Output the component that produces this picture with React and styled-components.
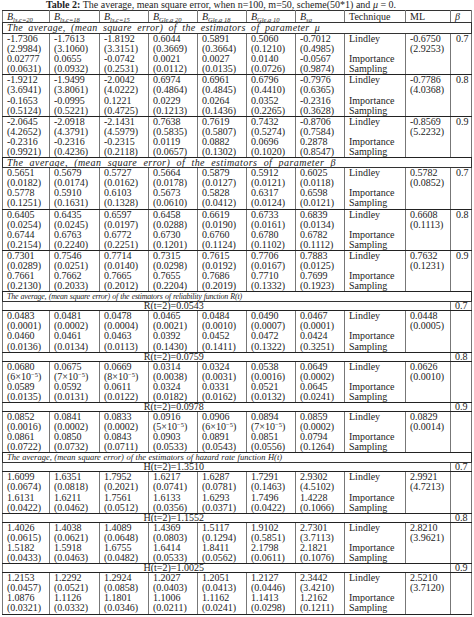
import React from 'react';
import styled, { createGlobalStyle, css } from 'styled-components';

const SERIF = `"Liberation Serif", "Times New Roman", Times, serif`;

const Global = createGlobalStyle`
  html, body { margin: 0; padding: 0; background: #fff; }
  body { font-family: ${SERIF}; color: #1c1c1c; }
`;

const cellFont = css`
  font-family: ${SERIF};
  color: #1c1c1c;
`;

const Page = styled.div`
  width: 474px;
  height: 617px;
  overflow: hidden;
  padding-left: 2px;
  box-sizing: border-box;
`;

const Caption = styled.div`
  width: 438px;
  height: 10px;
  font-family: ${SERIF};
  font-size: 10px;
  line-height: 10px;
  text-align: center;
  white-space: nowrap;
  b { font-weight: bold; }
  i { font-style: italic; }
`;

const Table = styled.table`
  ${cellFont};
  border-collapse: collapse;
  table-layout: fixed;
  width: 469px;
  font-size: 10px;
`;

const HeadCell = styled.th`
  ${cellFont};
  font-size: 10px;
  font-weight: normal;
  text-align: left;
  padding: 0 0 0 4px;
  height: 11px;
  line-height: 11px;
  border: 1px solid #333;
  border-left-color: #777;
  border-right-color: #777;
  white-space: nowrap;
  overflow: hidden;
  i { font-style: italic; }
  sub { font-size: 6.5px; font-style: italic; vertical-align: -2px; line-height: 0; }
`;

const SectionCell = styled.td`
  ${cellFont};
  font-style: italic;
  font-size: ${(p) => p.$size}px;
  letter-spacing: ${(p) => p.$ls}px;
  word-spacing: ${(p) => p.$ws}px;
  padding: 0 0 0 4px;
  height: ${(p) => p.$h}px;
  line-height: ${(p) => p.$h}px;
  border: 1px solid #333;
  white-space: nowrap;
  overflow: hidden;
`;

const RefCell = styled.td`
  ${cellFont};
  font-size: 10px;
  text-align: ${(p) => (p.$center ? 'center' : 'left')};
  padding: 0 0 0 ${(p) => (p.$center ? 0 : 4)}px;
  height: 8px;
  line-height: 8px;
  border-top: 1px solid #222;
  border-bottom: 1px solid #222;
  border-left: ${(p) => (p.$open ? 'none' : '1px solid #777')};
  border-right: ${(p) => (p.$openRight ? 'none' : '1px solid #777')};
  white-space: nowrap;
`;

const DataCell = styled.td`
  ${cellFont};
  font-size: 10px;
  vertical-align: top;
  padding: 0 0 0 ${(p) => p.$pad ?? 4}px;
  border-top: 1px solid #222;
  border-bottom: 1px solid #222;
  border-left: 1px solid #777;
  border-right: 1px solid #777;
  white-space: nowrap;
  overflow: hidden;
`;

const Line = styled.div`
  height: 10.1px;
  line-height: 10.1px;
  sup { font-size: 6.5px; line-height: 0; vertical-align: 3px; }
`;

const COLS = [47, 50, 49, 49, 49, 49, 49, 61, 45, 21];

const fmtMse = (s) => {
  if (s.includes('^')) {
    const [m, e] = s.split('^');
    return (
      <>
        ({m}
        <sup>{e}</sup>)
      </>
    );
  }
  return `(${s})`;
};

const sections = [
  {
    title: 'The average, (mean square error) of the estimators of parameter μ',
    style: { size: 10, ls: 0.33, ws: 2.5, h: 10 },
    blocks: [
      {
        beta: '0.7',
        cols: [
          ['-1.7306', '2.9984', '0.02777', '0.0631'],
          ['-1.7613', '3.1060', '0.0655', '0.0932'],
          ['-1.8192', '3.3151', '-0.0742', '0.2531'],
          ['0.6044', '0.3669', '0.0021', '0.0112'],
          ['0.5891', '0.3664', '0.0027', '0.0135'],
          ['0.5060', '0.1210', '0.0140', '0.0726'],
          ['-0.7012', '0.4985', '-0.0567', '0.9874'],
        ],
        ml: ['-0.6750', '2.9253'],
      },
      {
        beta: '0.8',
        cols: [
          ['-1.9212', '3.6941', '-0.1653', '0.5124'],
          ['-1.9499', '3.8061', '-0.0995', '0.5221'],
          ['-2.0042', '4.0222', '0.1221', '0.4725'],
          ['0.6974', '0.4864', '0.0229', '0.1213'],
          ['0.6961', '0.4845', '0.0264', '0.1436'],
          ['0.6796', '0.4410', '0.0352', '0.2265'],
          ['-0.7976', '0.6365', '-0.2316', '0.3628'],
        ],
        ml: ['-0.7786', '4.0368'],
      },
      {
        beta: '0.9',
        cols: [
          ['-2.0645', '4.2652', '-0.2316', '0.9921'],
          ['-2.0918', '4.3791', '-0.2316', '0.4236'],
          ['-2.1431', '4.5979', '-0.2315', '0.2118'],
          ['0.7638', '0.5835', '0.0119', '0.0657'],
          ['0.7619', '0.5807', '0.0882', '0.1302'],
          ['0.7432', '0.5274', '0.0696', '0.1020'],
          ['-0.8706', '0.7584', '0.2878', '0.8547'],
        ],
        ml: ['-0.8569', '5.2232'],
      },
    ],
  },
  {
    title: 'The average, (mean square error) of the estimators of parameter β',
    style: { size: 10, ls: 0.45, ws: 3.3, h: 9 },
    blocks: [
      {
        beta: '0.7',
        cols: [
          ['0.5651', '0.0182', '0.5778', '0.1251'],
          ['0.5679', '0.0174', '0.5910', '0.1631'],
          ['0.5727', '0.0162', '0.6103', '0.1328'],
          ['0.5664', '0.0178', '0.5673', '0.0610'],
          ['0.5879', '0.0127', '0.5828', '0.0412'],
          ['0.5912', '0.0121', '0.6317', '0.0124'],
          ['0.6025', '0.0118', '0.6598', '0.0121'],
        ],
        ml: ['0.5782', '0.0852'],
      },
      {
        beta: '0.8',
        cols: [
          ['0.6405', '0.0254', '0.6744', '0.2154'],
          ['0.6435', '0.0245', '0.6763', '0.2240'],
          ['0.6597', '0.0197', '0.6772', '0.2251'],
          ['0.6458', '0.0288', '0.6730', '0.1201'],
          ['0.6619', '0.0190', '0.6760', '0.1124'],
          ['0.6733', '0.0161', '0.6780', '0.1102'],
          ['0.6839', '0.0134', '0.6782', '0.1112'],
        ],
        ml: ['0.6608', '0.1113'],
      },
      {
        beta: '0.9',
        cols: [
          ['0.7301', '0.0289', '0.7661', '0.2130'],
          ['0.7546', '0.0251', '0.7662', '0.2033'],
          ['0.7714', '0.0140', '0.7665', '0.2012'],
          ['0.7315', '0.0298', '0.7655', '0.2204'],
          ['0.7615', '0.0192', '0.7686', '0.2019'],
          ['0.7706', '0.0167', '0.7710', '0.1332'],
          ['0.7883', '0.0125', '0.7699', '0.1923'],
        ],
        ml: ['0.7632', '0.1231'],
      },
    ],
  },
  {
    title: 'The average, (mean square error) of the estimators of reliability function R(t)',
    style: { size: 8, ls: -0.25, ws: 0.6, h: 9 },
    blocks: [
      {
        ref: 'R(t=2)=0.0543',
        beta: '0.7',
        cols: [
          ['0.0483', '0.0001', '0.0460', '0.0136'],
          ['0.0481', '0.0002', '0.0461', '0.0134'],
          ['0.0478', '0.0004', '0.0463', '0.0113'],
          ['0.0465', '0.0021', '0.0392', '0.1430'],
          ['0.0484', '0.0010', '0.0452', '0.1411'],
          ['0.0490', '0.0007', '0.0472', '0.1322'],
          ['0.0467', '0.0001', '0.0424', '0.3251'],
        ],
        ml: ['0.0448', '0.0005'],
      },
      {
        ref: 'R(t=2)=0.0759',
        beta: '0.8',
        cols: [
          ['0.0680', '6×10^−5', '0.0589', '0.0135'],
          ['0.0675', '7×10^−5', '0.0592', '0.0131'],
          ['0.0669', '8×10^−5', '0.0611', '0.0122'],
          ['0.0314', '0.0038', '0.0324', '0.0182'],
          ['0.0324', '0.0031', '0.0331', '0.0162'],
          ['0.0538', '0.0016', '0.0521', '0.0132'],
          ['0.0649', '0.0002', '0.0645', '0.0241'],
        ],
        ml: ['0.0626', '0.0010'],
      },
      {
        ref: 'R(t=2)=0.0978',
        beta: '0.9',
        cols: [
          ['0.0852', '0.0016', '0.0861', '0.0722'],
          ['0.0841', '0.0002', '0.0850', '0.0732'],
          ['0.0833', '0.0002', '0.0843', '0.0711'],
          ['0.0916', '5×10^−5', '0.0903', '0.0533'],
          ['0.0906', '6×10^−5', '0.0891', '0.0543'],
          ['0.0894', '7×10^−5', '0.0851', '0.0556'],
          ['0.0859', '0.0002', '0.0794', '0.1264'],
        ],
        ml: ['0.0829', '0.0014'],
      },
    ],
  },
  {
    title: 'The average, (mean square error) of the estimators of hazard rate function H(t)',
    style: { size: 8.5, ls: 0, ws: 0.4, h: 9 },
    blocks: [
      {
        ref: 'H(t=2)=1.3510',
        beta: '0.7',
        cols: [
          ['1.6099', '0.0674', '1.6131', '0.0422'],
          ['1.6351', '0.0818', '1.6211', '0.0462'],
          ['1.7952', '0.2021', '1.7561', '0.0512'],
          ['1.6217', '0.0741', '1.6133', '0.0356'],
          ['1.6287', '0.0781', '1.6293', '0.0371'],
          ['1.7291', '0.1463', '1.7496', '0.0422'],
          ['2.9302', '4.5102', '1.4228', '0.1066'],
        ],
        ml: ['2.9921', '4.7213'],
      },
      {
        ref: 'H(t=2)=1.1552',
        beta: '0.8',
        cols: [
          ['1.4026', '0.0615', '1.5182', '0.0433'],
          ['1.4038', '0.0621', '1.5918', '0.0463'],
          ['1.4089', '0.0648', '1.6755', '0.0482'],
          ['1.4369', '0.0803', '1.6414', '0.0533'],
          ['1.5117', '0.1294', '1.8411', '0.0562'],
          ['1.9102', '0.5851', '2.1798', '0.0611'],
          ['2.7301', '3.7113', '2.1821', '0.1076'],
        ],
        ml: ['2.8210', '3.9621'],
      },
      {
        ref: 'H(t=2)=1.0025',
        beta: '0.9',
        cols: [
          ['1.2153', '0.0457', '1.0876', '0.0321'],
          ['1.2292', '0.0521', '1.1126', '0.0332'],
          ['1.2924', '0.0858', '1.1801', '0.0346'],
          ['1.2027', '0.0403', '1.1006', '0.0211'],
          ['1.2051', '0.0413', '1.1162', '0.0241'],
          ['1.2127', '0.0446', '1.1413', '0.0298'],
          ['2.3442', '3.4210', '1.2162', '0.1211'],
        ],
        ml: ['2.5210', '3.7120'],
      },
    ],
  },
];

const headers = [
  ['B', 'ls,c=20'],
  ['B', 'ls,c=18'],
  ['B', 'ls,c=15'],
  ['B', 'Gle,q  20'],
  ['B', 'Gle,q  18'],
  ['B', 'Gle,q  10'],
  ['B', 'sq'],
];

function Block({ block }) {
  return (
    <>
      {block.ref && (
        <tr>
          <RefCell colSpan={7} $center $openRight>
            {block.ref}
          </RefCell>
          <RefCell colSpan={2} $open />
          <RefCell>{block.beta}</RefCell>
        </tr>
      )}
      <tr>
        {block.cols.map((c, i) => (
          <DataCell key={i}>
            <Line>{c[0]}</Line>
            <Line>{fmtMse(c[1])}</Line>
            <Line>{c[2]}</Line>
            <Line>{fmtMse(c[3])}</Line>
          </DataCell>
        ))}
        <DataCell>
          <Line>Lindley</Line>
          <Line />
          <Line>Importance</Line>
          <Line>Sampling</Line>
        </DataCell>
        <DataCell>
          <Line>{block.ml[0]}</Line>
          <Line>{fmtMse(block.ml[1])}</Line>
        </DataCell>
        <DataCell $pad={5}>{!block.ref && <Line>{block.beta}</Line>}</DataCell>
      </tr>
    </>
  );
}

export default function App() {
  return (
    <>
      <Global />
      <Page>
        <Caption>
          <b>Table 2:</b> The average, mean square error, when n=100, m=50, scheme(50*1) and <i>μ</i> = 0.
        </Caption>
        <Table>
          <colgroup>
            {COLS.map((w, i) => (
              <col key={i} style={{ width: w }} />
            ))}
          </colgroup>
          <thead>
            <tr>
              {headers.map(([b, s], i) => (
                <HeadCell key={i}>
                  <i>{b}</i>
                  <sub>{s}</sub>
                </HeadCell>
              ))}
              <HeadCell>Technique</HeadCell>
              <HeadCell>ML</HeadCell>
              <HeadCell>
                <i>β</i>
              </HeadCell>
            </tr>
          </thead>
          <tbody>
            {sections.map((sec, si) => (
              <React.Fragment key={si}>
                <tr>
                  <SectionCell
                    colSpan={10}
                    $size={sec.style.size}
                    $ls={sec.style.ls}
                    $ws={sec.style.ws}
                    $h={sec.style.h}
                  >
                    {sec.title}
                  </SectionCell>
                </tr>
                {sec.blocks.map((b, bi) => (
                  <Block key={bi} block={b} />
                ))}
              </React.Fragment>
            ))}
          </tbody>
        </Table>
      </Page>
    </>
  );
}
